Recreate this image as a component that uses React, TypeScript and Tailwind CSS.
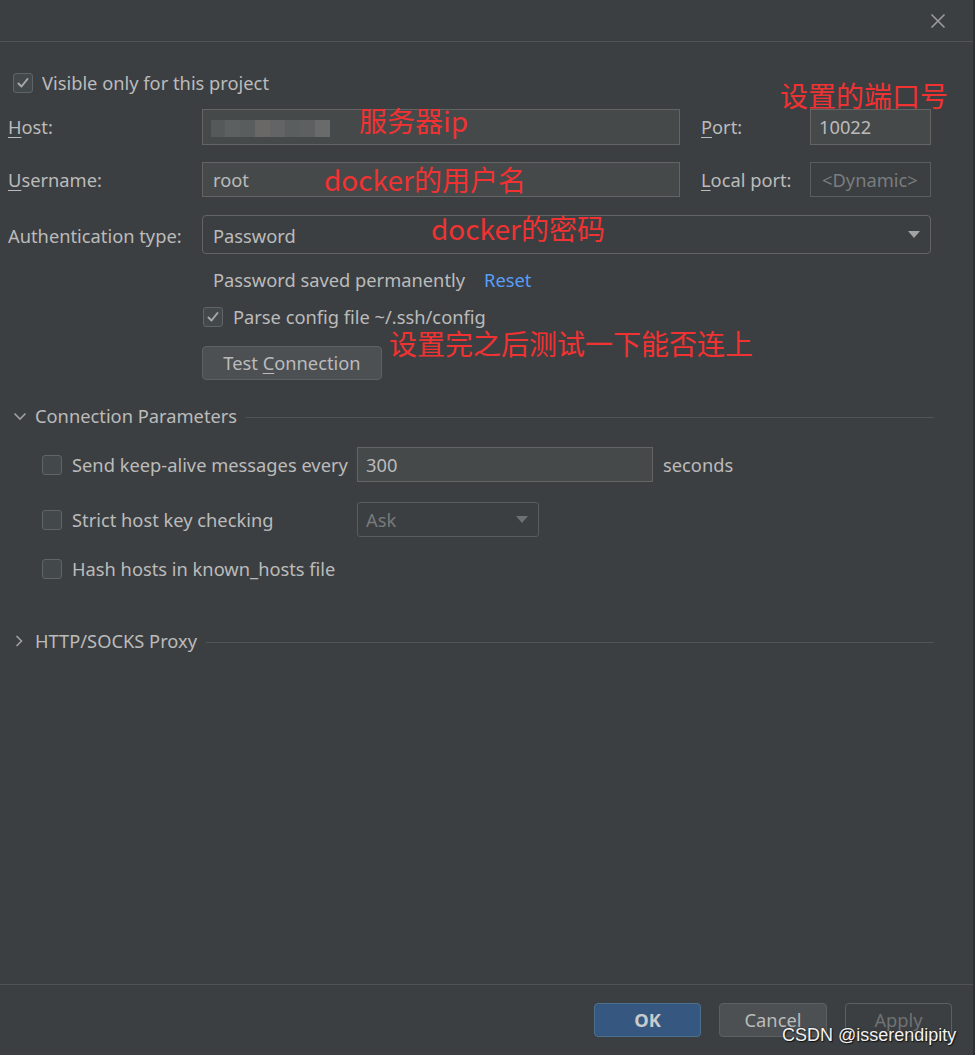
import React from "react";

function Check({ checked }: { checked?: boolean }) {
  return (
    <div className="w-[20px] h-[20px] rounded-[3px] border border-[#5f6466] bg-[#43494a] flex items-center justify-center shrink-0">
      {checked && (
        <svg width="14" height="14" viewBox="0 0 14 14">
          <path d="M2.5 7.5 L5.5 10.5 L11.5 3" stroke="#a7a7a7" strokeWidth="2" fill="none" strokeLinecap="round" strokeLinejoin="round" />
        </svg>
      )}
    </div>
  );
}

function U({ children }: { children: React.ReactNode }) {
  return <span className="underline underline-offset-[3px] decoration-1">{children}</span>;
}

const ann = "absolute text-[28px] leading-none text-[#f03232] whitespace-nowrap";
const annFont = { fontFamily: '"Noto Sans CJK SC", "Noto Sans", sans-serif' };

export default function App() {
  return (
    <div
      className="relative w-[975px] h-[1055px] bg-[#3c3f41] text-[#bbbbbb] text-[18.3px] flex flex-col border-r-2 border-[#2e3032] overflow-hidden"
      style={{ fontFamily: '"Noto Sans", "Open Sans", sans-serif' }}
    >
      {/* header */}
      <div className="h-[42px] shrink-0 flex items-center justify-end pr-[27px] border-b border-[#515354]">
        <svg width="16" height="16" viewBox="0 0 16 16">
          <path d="M1.5 1.5 L14.5 14.5 M14.5 1.5 L1.5 14.5" stroke="#9a9c9e" strokeWidth="1.6" />
        </svg>
      </div>

      {/* body */}
      <div className="flex-1 flex flex-col pl-[8px]">
        <div className="mt-[30px] h-[22px] flex items-center pl-[5px] gap-[9px]">
          <Check checked />
          <span>Visible only for this project</span>
        </div>

        {/* Host row */}
        <div className="mt-[15px] h-[36px] flex items-center">
          <div className="w-[194px] shrink-0"><U>H</U>ost:</div>
          <div className="w-[478px] h-full bg-[#45494a] border border-[#646464] flex items-center pl-[8px]">
            <div className="flex h-[17px] mt-[2px]">
              <div className="w-[14px] bg-[#56595a]" />
              <div className="w-[15px] bg-[#5d6061]" />
              <div className="w-[15px] bg-[#5a5d5e]" />
              <div className="w-[15px] bg-[#6a6866]" />
              <div className="w-[15px] bg-[#626465]" />
              <div className="w-[15px] bg-[#5b5e5f]" />
              <div className="w-[15px] bg-[#5d6061]" />
              <div className="w-[15px] bg-[#696b6b]" />
            </div>
          </div>
          <div className="w-[130px] shrink-0 pl-[21px]"><U>P</U>ort:</div>
          <div className="w-[121px] h-full bg-[#45494a] border border-[#646464] flex items-center pl-[8px]">10022</div>
        </div>

        {/* Username row */}
        <div className="mt-[17px] h-[35px] flex items-center">
          <div className="w-[194px] shrink-0"><U>U</U>sername:</div>
          <div className="w-[478px] h-full bg-[#45494a] border border-[#646464] flex items-center pl-[10px]">root</div>
          <div className="w-[130px] shrink-0 pl-[21px]"><U>L</U>ocal port:</div>
          <div className="w-[121px] h-full bg-[#3c3f41] border border-[#5a5d5f] flex items-center pl-[11px] text-[#7a7c7e]">&lt;Dynamic&gt;</div>
        </div>

        {/* Auth row */}
        <div className="mt-[18px] h-[39px] flex items-center">
          <div className="w-[194px] shrink-0 pt-[2px]">Authentication type:</div>
          <div className="w-[729px] h-full bg-[#3c3f41] border border-[#646464] rounded-[4px] flex items-center justify-between pl-[10px] pr-[10px]">
            <span className="pt-[2px]">Password</span>
            <svg width="12" height="8" viewBox="0 0 12 8">
              <path d="M0 0 L12 0 L6 7 Z" fill="#a3a3a3" />
            </svg>
          </div>
        </div>

        <div className="mt-[15px] h-[22px] flex items-center pl-[205px]">
          <span>Password saved permanently</span>
          <span className="ml-[19px] text-[#589df6]">Reset</span>
        </div>

        <div className="mt-[15px] h-[22px] flex items-center pl-[195px] gap-[10px]">
          <Check checked />
          <span>Parse config file ~/.ssh/config</span>
        </div>

        <div className="mt-[18px] pl-[194px]">
          <div className="w-[180px] h-[34px] bg-[#4c5052] border border-[#5e6060] rounded-[4px] flex items-center justify-center">
            <span>
              Test <U>C</U>onnection
            </span>
          </div>
        </div>

        {/* Connection Parameters */}
        <div className="mt-[25px] h-[22px] flex items-center pl-[5px] pr-[39px]">
          <svg width="14" height="10" viewBox="0 0 14 10" className="shrink-0">
            <path d="M1.5 2.5 L7 8 L12.5 2.5" stroke="#a0a0a0" strokeWidth="1.6" fill="none" />
          </svg>
          <span className="ml-[8px] whitespace-nowrap">Connection Parameters</span>
          <div className="flex-1 h-px bg-[#515354] ml-[9px] mt-[2px]" />
        </div>

        <div className="mt-[20px] h-[35px] flex items-center pl-[34px]">
          <div className="w-[315px] flex items-center gap-[10px]">
            <Check />
            <span className="whitespace-nowrap">Send keep-alive messages every</span>
          </div>
          <div className="w-[296px] h-full bg-[#45494a] border border-[#646464] flex items-center pl-[8px]">300</div>
          <span className="ml-[10px]">seconds</span>
        </div>

        <div className="mt-[20px] h-[35px] flex items-center pl-[34px]">
          <div className="w-[315px] flex items-center gap-[10px]">
            <Check />
            <span className="whitespace-nowrap">Strict host key checking</span>
          </div>
          <div className="w-[182px] h-full bg-[#3c3f41] border border-[#5a5d5f] rounded-[3px] flex items-center justify-between pl-[8px] pr-[10px] text-[#777a7c]">
            <span>Ask</span>
            <svg width="12" height="8" viewBox="0 0 12 8">
              <path d="M0 0 L12 0 L6 7 Z" fill="#6e7173" />
            </svg>
          </div>
        </div>

        <div className="mt-[21px] h-[22px] flex items-center pl-[34px] gap-[10px]">
          <Check />
          <span className="whitespace-nowrap">Hash hosts in known_hosts file</span>
        </div>

        <div className="mt-[50px] h-[22px] flex items-center pl-[6px] pr-[39px]">
          <svg width="10" height="14" viewBox="0 0 10 14" className="shrink-0">
            <path d="M2.5 2 L7.5 7 L2.5 12" stroke="#a0a0a0" strokeWidth="1.6" fill="none" />
          </svg>
          <span className="ml-[11px] whitespace-nowrap">HTTP/SOCKS Proxy</span>
          <div className="flex-1 h-px bg-[#515354] ml-[9px] mt-[2px]" />
        </div>
      </div>

      {/* footer */}
      <div className="h-[71px] shrink-0 border-t border-[#515354] flex justify-end items-start pt-[18px] pr-[21px] gap-[18px]">
        <div className="w-[107px] h-[34px] bg-[#365880] border border-[#4c708c] rounded-[4px] flex items-center justify-center font-bold text-[#c8cbcd]">OK</div>
        <div className="w-[108px] h-[34px] bg-[#4c5052] border border-[#5e6060] rounded-[4px] flex items-center justify-center">Cancel</div>
        <div className="w-[107px] h-[34px] bg-[#3c3f41] border border-[#5e6060] rounded-[4px] flex items-center justify-center text-[#6f7274]">Apply</div>
      </div>

      {/* annotations */}
      <div className={ann} style={{ ...annFont, left: 359, top: 106 }}>服务器ip</div>
      <div className={ann} style={{ ...annFont, left: 780, top: 81 }}>设置的端口号</div>
      <div className={ann} style={{ ...annFont, left: 324, top: 165 }}>docker的用户名</div>
      <div className={ann} style={{ ...annFont, left: 431, top: 214 }}>docker的密码</div>
      <div className={ann} style={{ ...annFont, left: 389, top: 329 }}>设置完之后测试一下能否连上</div>

      {/* watermark */}
      <div
        className="absolute left-[782px] top-[1026px] text-[18px] leading-none text-[#f2f2f2] whitespace-nowrap"
        style={{ fontFamily: '"Liberation Sans", Arial, sans-serif', textShadow: "1px 1px 1px #111, 0 0 2px #222" }}
      >
        CSDN @isserendipity
      </div>
    </div>
  );
}
